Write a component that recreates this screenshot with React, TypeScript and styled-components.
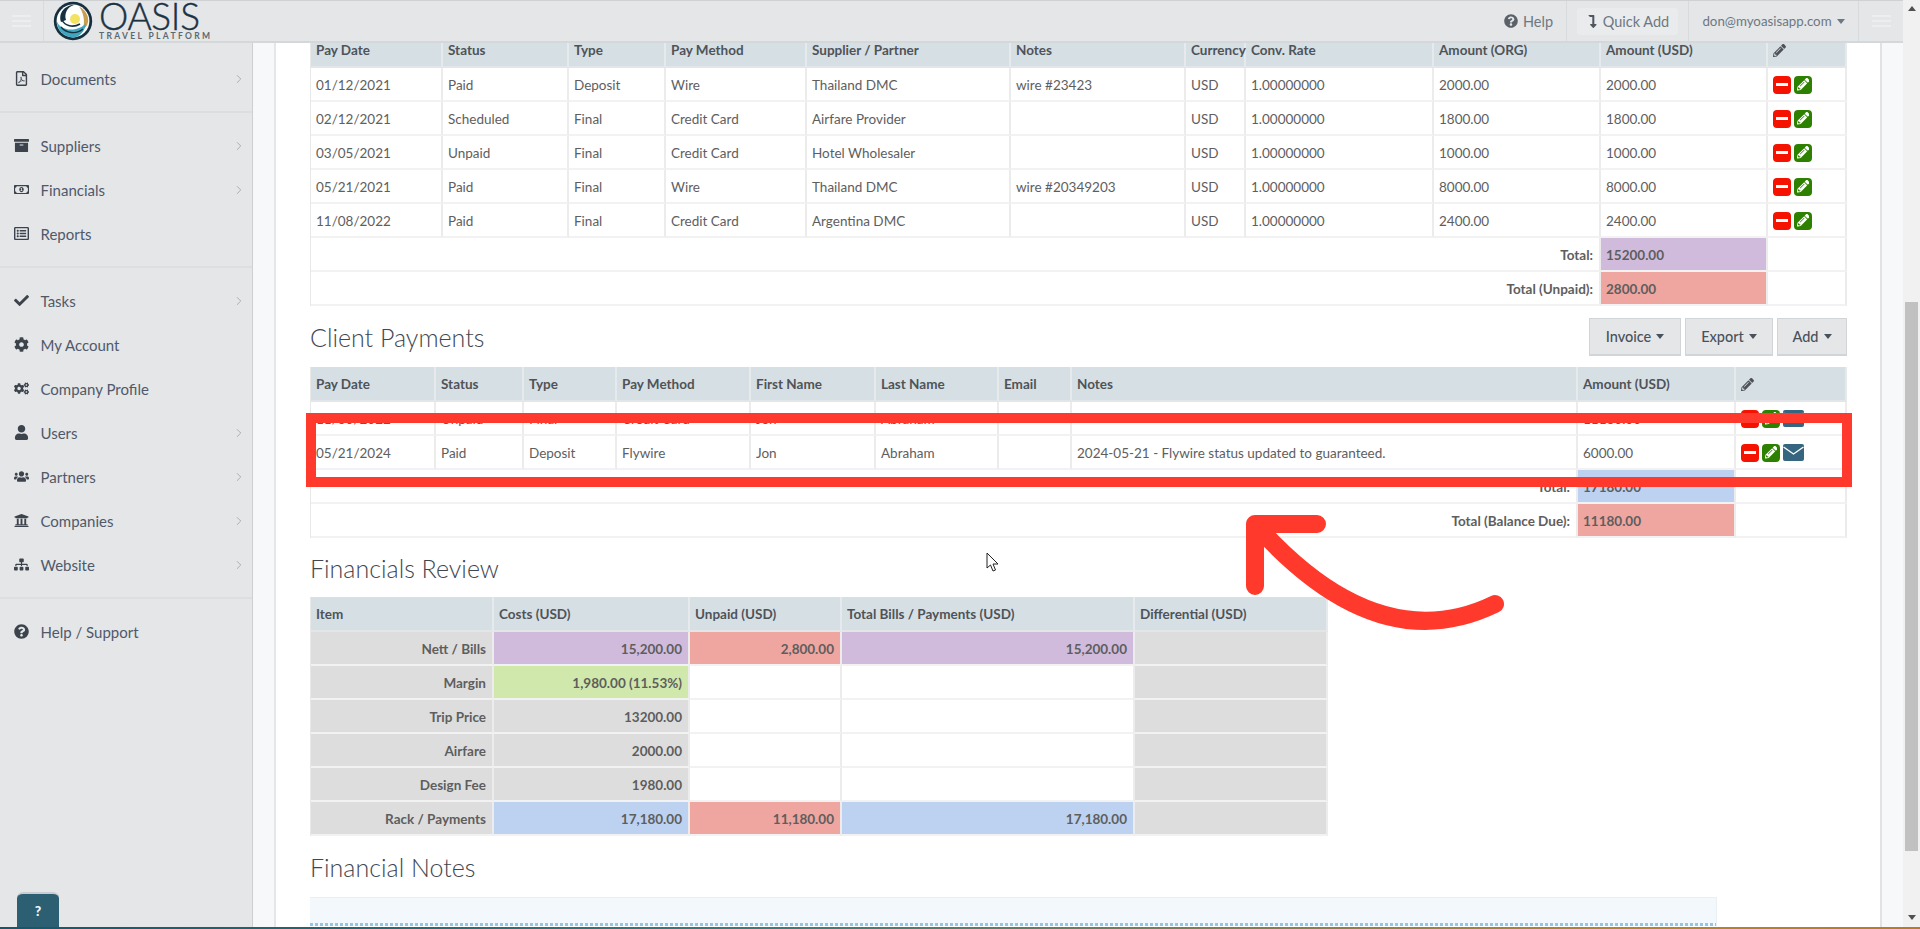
import styled, { createGlobalStyle } from "styled-components";
import { ChevronRight } from "lucide-react";
import {
  FaRegFilePdf,
  FaArchive,
  FaRegMoneyBillAlt,
  FaRegListAlt,
  FaCheck,
  FaCog,
  FaCogs,
  FaUser,
  FaUsers,
  FaUniversity,
  FaSitemap,
  FaQuestionCircle,
  FaPencilAlt,
  FaLevelDownAlt,
} from "react-icons/fa";

const GlobalStyle = createGlobalStyle`
  html, body { margin: 0; padding: 0; height: 100%; overflow: hidden; }
  body { font-family: "Lato", "Noto Sans", sans-serif; font-size: 14px; color: #5c5c5c; }
  * { box-sizing: border-box; }
`;

const Shell = styled.div`
  position: relative;
  height: 929px;
  display: flex;
  flex-direction: column;
  overflow: hidden;
  background: #fff;
`;
const Frame = styled.div`
  flex: 1;
  min-height: 0;
  display: flex;
`;
const PageColumn = styled.div`
  flex: 1;
  min-width: 0;
  display: flex;
  flex-direction: column;
`;

/* top bar */
const TopBar = styled.header`
  height: 43px;
  flex: none;
  display: flex;
  align-items: stretch;
  background: #e4e6e8;
  border-top: 1px solid #cfd2d5;
  border-bottom: 2px solid #d5d8db;
  color: #6d7882;
  font-size: 14.5px;
  position: relative;
  z-index: 2;
`;
const BurgerCell = styled.div<{ $w: number; $left?: boolean }>`
  width: ${(p) => p.$w}px;
  flex: none;
  display: flex;
  align-items: center;
  justify-content: center;
  ${(p) => (p.$left ? "border-right: 1px solid #d8dbde;" : "")}
`;
const Burger = styled.span`
  width: 19px;
  height: 12px;
  border-top: 2px solid #eceeef;
  border-bottom: 2px solid #eceeef;
  position: relative;
  &::after {
    content: "";
    position: absolute;
    left: 0;
    right: 0;
    top: 3px;
    height: 2px;
    background: #eceeef;
  }
`;
const LogoWrap = styled.div`
  display: flex;
  align-items: flex-start;
  margin-left: 9px;
  gap: 6px;
`;
const LogoText = styled.div`
  display: flex;
  flex-direction: column;
  width: 100px;
`;
const LogoName = styled.span`
  font-weight: 300;
  font-size: 37px;
  line-height: 30px;
  color: #1c3243;
  letter-spacing: -0.3px;
  -webkit-text-stroke: 0.4px #1c3243;
`;
const LogoSub = styled.span`
  font-size: 8.5px;
  line-height: 9px;
  margin-top: 1px;
  font-weight: 700;
  letter-spacing: 2.35px;
  color: #5c6972;
  white-space: nowrap;
`;
const TopSpacer = styled.div`
  flex: 1;
`;
const NavCell = styled.div<{ $w: number }>`
  width: ${(p) => p.$w}px;
  flex: none;
  display: flex;
  align-items: center;
  justify-content: center;
  gap: 5px;
  border-right: 1px solid #d8dbde;
  white-space: nowrap;
`;
const Email = styled.span`
  font-size: 13.3px;
`;
const QuickAdd = styled.span`
  display: flex;
  align-items: center;
  gap: 4px;
  height: 27px;
  padding: 0 9px;
  background: #e9ebec;
  border-radius: 3px;
  svg { color: #4e565e; font-size: 13px; }
`;
const HelpGlyph = styled(FaQuestionCircle)`
  color: #5a6169;
  font-size: 14px;
`;
const Caret = styled.span`
  display: inline-block;
  border-top: 5px solid currentColor;
  border-left: 4.5px solid transparent;
  border-right: 4.5px solid transparent;
`;

/* sidebar */
const Body = styled.div`
  flex: 1;
  min-height: 0;
  display: flex;
`;
const Sidebar = styled.nav`
  width: 253px;
  flex: none;
  background: #e4e6e8;
  border-right: 1px solid #cdd0d3;
  padding-top: 3px;
  color: #50596a;
  font-size: 15px;
`;
const NavGroup = styled.div`
  padding: 10.5px 0;
  border-bottom: 2px solid #dcdee1;
  &:last-child { border-bottom: 0; }
`;
const NavItem = styled.div`
  height: 44px;
  display: flex;
  align-items: center;
  padding: 0 6px 0 11px;
  gap: 9.5px;
`;
const NavIcon = styled.span`
  width: 20px;
  display: flex;
  justify-content: center;
  font-size: 15px;
  color: #3c434c;
`;
const NavLabel = styled.span`
  flex: 1;
`;
const Chevron = styled(ChevronRight)`
  color: #a2a8ae;
  width: 14px;
  height: 14px;
  stroke-width: 1.5;
`;

/* main area */
const Gutter = styled.div`
  width: 23px;
  flex: none;
  background: #f6f8fa;
  border-right: 2px solid #e4e6e8;
`;
const GutterRight = styled(Gutter)`
  border-right: 0;
  border-left: 2px solid #e0e2e5;
`;
const Content = styled.main`
  flex: 1;
  min-width: 0;
  overflow: hidden;
  padding: 0 33px 0 34px;
`;
const Scrolled = styled.div`
  margin-top: -10px;
`;
const Table = styled.table<{ $w: number }>`
  width: ${(p) => p.$w}px;
  table-layout: fixed;
  border-collapse: separate;
  border-spacing: 0;
  border-left: 1px solid #e8e8e8;
`;
const Col = styled.col<{ $w: number }>`
  width: ${(p) => p.$w}px;
`;
const Th = styled.th`
  height: 35px;
  padding: 1px 6px 0 5px;
  text-align: left;
  font-weight: 700;
  font-size: 13.5px;
  color: #4f5358;
  background: #d6dfe4;
  border-right: 2px solid #e6eaec;
  border-bottom: 2px solid #e3e6e8;
  white-space: nowrap;
  svg { color: #4f5358; font-size: 13px; display: block; }
`;
const Td = styled.td<{ $bg?: string; $right?: boolean; $bold?: boolean }>`
  height: 34px;
  padding: 1px 6px 0 5px;
  font-size: 13.5px;
  color: #5e5e5e;
  background: ${(p) => p.$bg ?? "#fff"};
  text-align: ${(p) => (p.$right ? "right" : "left")};
  font-weight: ${(p) => (p.$bold ? 700 : 400)};
  border-right: 2px solid #ececec;
  border-bottom: 2px solid #f2f2f2;
  white-space: nowrap;
`;
const SectionHead = styled.div<{ $h: number }>`
  height: ${(p) => p.$h}px;
  display: flex;
  align-items: center;
  justify-content: space-between;
  width: 1537px;
`;
const SectionTitle = styled.h3`
  margin: 0;
  font-weight: 300;
  font-size: 25px;
  color: #3f4750;
`;
const Buttons = styled.div`
  display: flex;
  gap: 4px;
`;
const DropButton = styled.button<{ $w: number }>`
  width: ${(p) => p.$w}px;
  height: 38px;
  display: flex;
  align-items: center;
  justify-content: center;
  gap: 5px;
  background: #e4e6e8;
  border: 1px solid #d2d5d8;
  border-bottom-width: 2px;
  font-family: inherit;
  font-size: 14.5px;
  font-weight: 500;
  color: #49525c;
`;
const Actions = styled.div`
  display: flex;
  align-items: center;
  gap: 3px;
`;
const Square = styled.span<{ $c: string }>`
  width: 18px;
  height: 18px;
  border-radius: 4px;
  background: ${(p) => p.$c};
  display: flex;
  align-items: center;
  justify-content: center;
  color: #fff;
  svg { font-size: 12.5px; }
`;
const MinusBar = styled.span`
  width: 12px;
  height: 3px;
  background: #fff;
`;
const NotesBox = styled.div`
  width: 1407px;
  height: 29px;
  background: repeating-linear-gradient(90deg, #92c5e8 0 3px, transparent 3px 5px) bottom / 100% 3px no-repeat, #f3f8fc;
  border-top: 1px solid #e8f0f6;
  border-right: 1px solid #e8f0f6;
`;

/* scrollbar */
const ScrollBar = styled.div`
  width: 17px;
  flex: none;
  background: #f1f1f1;
  display: flex;
  flex-direction: column;
  align-items: center;
  padding: 6px 0 6px;
`;
const ArrowUp = styled.span`
  border-bottom: 5px solid #505050;
  border-left: 4px solid transparent;
  border-right: 4px solid transparent;
`;
const ArrowDown = styled.span`
  border-top: 5px solid #505050;
  border-left: 4px solid transparent;
  border-right: 4px solid transparent;
  margin-top: auto;
  margin-bottom: 1px;
`;
const Thumb = styled.div`
  width: 13px;
  height: 549px;
  margin-top: 291px;
  background: #c1c1c1;
`;
const BottomLine = styled.div`
  height: 2px;
  flex: none;
  background: linear-gradient(90deg, #17566a 0%, #3d7a78 40%, #b5842f 85%, #b87a2a 100%);
`;

/* things lying over the page */
const HelpTab = styled.button`
  position: absolute;
  left: 17px;
  bottom: 2px;
  width: 42px;
  height: 35px;
  border: 0;
  border-top: 2px solid #c9ccd0;
  border-radius: 6px 6px 0 0;
  background: #2d5f73;
  color: #f2f5f6;
  font-family: inherit;
  font-weight: 900;
  font-size: 14px;
  z-index: 3;
`;
const RedFrame = styled.div`
  position: absolute;
  left: 306px;
  top: 413px;
  width: 1546px;
  height: 74px;
  border: 10px solid #ff392c;
  z-index: 4;
`;
const Overlay = styled.svg`
  position: absolute;
  left: 0;
  top: 0;
  z-index: 4;
  pointer-events: none;
`;

const Minus = () => (
  <Square $c="#f51300">
    <MinusBar />
  </Square>
);
const Edit = () => (
  <Square $c="#2e8000">
    <FaPencilAlt />
  </Square>
);
const Mail = () => (
  <svg width="21" height="17" viewBox="0 0 21 17">
    <rect width="21" height="17" rx="2" fill="#36657f" />
    <path d="M0.5 3 L10.5 10 L20.5 3" fill="none" stroke="#fff" strokeWidth="1.4" />
  </svg>
);

const Logo = () => (
  <svg width="40" height="40" viewBox="0 0 40 40">
    <circle cx="20" cy="20" r="19.2" fill="#17303f" />
    <circle cx="20" cy="20" r="16.4" fill="#fff" />
    <path d="M26 5.5 C33 9 36 16 35 21 C34.4 25 32 27 30 28 C32 21 31 12 26 5.5 Z" fill="#c9a04e" />
    <path d="M3.8 20 C6 27 15 30 23 28 C27 27 31 25 33 22 C32 31 26 36.4 20 36.4 C11 36.4 4 29 3.8 20 Z" fill="#3fa6bf" />
    <path d="M9 19 C12 25 20 27 27 23" fill="none" stroke="#17303f" strokeWidth="1.6" />
    <path d="M8 26 C13 32 23 34 30 28" fill="none" stroke="#17303f" strokeWidth="1.3" />
    <path d="M8 21 C5 12 12 4 21 4 C14 6 11 13 13 19 Z" fill="#17303f" />
    <circle cx="22" cy="18" r="5" fill="#f2e462" />
  </svg>
);

type Bill = [string, string, string, string, string, string, string];
const bills: Bill[] = [
  ["01/12/2021", "Paid", "Deposit", "Wire", "Thailand DMC", "wire #23423", "2000.00"],
  ["02/12/2021", "Scheduled", "Final", "Credit Card", "Airfare Provider", "", "1800.00"],
  ["03/05/2021", "Unpaid", "Final", "Credit Card", "Hotel Wholesaler", "", "1000.00"],
  ["05/21/2021", "Paid", "Final", "Wire", "Thailand DMC", "wire #20349203", "8000.00"],
  ["11/08/2022", "Paid", "Final", "Credit Card", "Argentina DMC", "", "2400.00"],
];
const billCols = [132, 126, 97, 141, 204, 175, 60, 188, 167, 167, 79];
const billHead = ["Pay Date", "Status", "Type", "Pay Method", "Supplier / Partner", "Notes", "Currency", "Conv. Rate", "Amount (ORG)", "Amount (USD)"];

const payCols = [125, 88, 93, 134, 125, 123, 73, 506, 158, 111];
const payHead = ["Pay Date", "Status", "Type", "Pay Method", "First Name", "Last Name", "Email", "Notes", "Amount (USD)"];
const payments = [
  ["11/30/2022", "Unpaid", "Final", "Credit Card", "Jon", "Abraham", "", "", "11180.00"],
  ["05/21/2024", "Paid", "Deposit", "Flywire", "Jon", "Abraham", "", "2024-05-21 - Flywire status updated to guaranteed.", "6000.00"],
];

const PURPLE = "#d0bbdd";
const RED = "#efa5a0";
const BLUE = "#bcd2f0";
const GREEN = "#d0e8ab";
const GREY = "#dddddd";

const reviewCols = [183, 196, 152, 293, 193];
const review: { item: string; cost: string; costBg: string; unpaid?: string; unpaidBg?: string; bills?: string; billsBg?: string }[] = [
  { item: "Nett / Bills", cost: "15,200.00", costBg: PURPLE, unpaid: "2,800.00", unpaidBg: RED, bills: "15,200.00", billsBg: PURPLE },
  { item: "Margin", cost: "1,980.00 (11.53%)", costBg: GREEN },
  { item: "Trip Price", cost: "13200.00", costBg: GREY },
  { item: "Airfare", cost: "2000.00", costBg: GREY },
  { item: "Design Fee", cost: "1980.00", costBg: GREY },
  { item: "Rack / Payments", cost: "17,180.00", costBg: BLUE, unpaid: "11,180.00", unpaidBg: RED, bills: "17,180.00", billsBg: BLUE },
];

const navGroups = [
  [{ icon: <FaRegFilePdf />, label: "Documents", more: true }],
  [
    { icon: <FaArchive />, label: "Suppliers", more: true },
    { icon: <FaRegMoneyBillAlt />, label: "Financials", more: true },
    { icon: <FaRegListAlt />, label: "Reports", more: false },
  ],
  [
    { icon: <FaCheck />, label: "Tasks", more: true },
    { icon: <FaCog />, label: "My Account", more: false },
    { icon: <FaCogs />, label: "Company Profile", more: false },
    { icon: <FaUser />, label: "Users", more: true },
    { icon: <FaUsers />, label: "Partners", more: true },
    { icon: <FaUniversity />, label: "Companies", more: true },
    { icon: <FaSitemap />, label: "Website", more: true },
  ],
  [{ icon: <FaQuestionCircle />, label: "Help / Support", more: false }],
];

function App() {
  return (
    <Shell>
      <GlobalStyle />
      <Frame>
        <PageColumn>
          <TopBar>
            <BurgerCell $w={44} $left>
              <Burger />
            </BurgerCell>
            <LogoWrap>
              <Logo />
              <LogoText>
                <LogoName>OASIS</LogoName>
                <LogoSub>TRAVEL PLATFORM</LogoSub>
              </LogoText>
            </LogoWrap>
            <TopSpacer />
            <NavCell $w={76}>
              <HelpGlyph />
              Help
            </NavCell>
            <NavCell $w={122}>
              <QuickAdd>
                <FaLevelDownAlt />
                Quick Add
              </QuickAdd>
            </NavCell>
            <NavCell $w={170}>
              <Email>don@myoasisapp.com</Email>
              <Caret />
            </NavCell>
            <BurgerCell $w={44}>
              <Burger />
            </BurgerCell>
          </TopBar>
          <Body>
            <Sidebar>
              {navGroups.map((group) => (
                <NavGroup key={group[0].label}>
                  {group.map((item) => (
                    <NavItem key={item.label}>
                      <NavIcon>{item.icon}</NavIcon>
                      <NavLabel>{item.label}</NavLabel>
                      {item.more && <Chevron />}
                    </NavItem>
                  ))}
                </NavGroup>
              ))}
            </Sidebar>
            <Gutter />
            <Content>
              <Scrolled>
                <Table $w={1537}>
                  <colgroup>
                    {billCols.map((w, i) => (
                      <Col key={i} $w={w} />
                    ))}
                  </colgroup>
                  <thead>
                    <tr>
                      {billHead.map((h) => (
                        <Th key={h}>{h}</Th>
                      ))}
                      <Th>
                        <FaPencilAlt />
                      </Th>
                    </tr>
                  </thead>
                  <tbody>
                    {bills.map((b) => (
                      <tr key={b[0]}>
                        <Td>{b[0]}</Td>
                        <Td>{b[1]}</Td>
                        <Td>{b[2]}</Td>
                        <Td>{b[3]}</Td>
                        <Td>{b[4]}</Td>
                        <Td>{b[5]}</Td>
                        <Td>USD</Td>
                        <Td>1.00000000</Td>
                        <Td>{b[6]}</Td>
                        <Td>{b[6]}</Td>
                        <Td>
                          <Actions>
                            <Minus />
                            <Edit />
                          </Actions>
                        </Td>
                      </tr>
                    ))}
                    <tr>
                      <Td colSpan={9} $right $bold>
                        Total:
                      </Td>
                      <Td $bg={PURPLE} $bold>
                        15200.00
                      </Td>
                      <Td />
                    </tr>
                    <tr>
                      <Td colSpan={9} $right $bold>
                        Total (Unpaid):
                      </Td>
                      <Td $bg={RED} $bold>
                        2800.00
                      </Td>
                      <Td />
                    </tr>
                  </tbody>
                </Table>

                <SectionHead $h={61}>
                  <SectionTitle>Client Payments</SectionTitle>
                  <Buttons>
                    <DropButton $w={92}>
                      Invoice <Caret />
                    </DropButton>
                    <DropButton $w={88}>
                      Export <Caret />
                    </DropButton>
                    <DropButton $w={70}>
                      Add <Caret />
                    </DropButton>
                  </Buttons>
                </SectionHead>
                <Table $w={1537}>
                  <colgroup>
                    {payCols.map((w, i) => (
                      <Col key={i} $w={w} />
                    ))}
                  </colgroup>
                  <thead>
                    <tr>
                      {payHead.map((h) => (
                        <Th key={h}>{h}</Th>
                      ))}
                      <Th>
                        <FaPencilAlt />
                      </Th>
                    </tr>
                  </thead>
                  <tbody>
                    {payments.map((p) => (
                      <tr key={p[0]}>
                        {p.map((cell, i) => (
                          <Td key={i}>{cell}</Td>
                        ))}
                        <Td>
                          <Actions>
                            <Minus />
                            <Edit />
                            <Mail />
                          </Actions>
                        </Td>
                      </tr>
                    ))}
                    <tr>
                      <Td colSpan={8} $right $bold>
                        Total:
                      </Td>
                      <Td $bg={BLUE} $bold>
                        17180.00
                      </Td>
                      <Td />
                    </tr>
                    <tr>
                      <Td colSpan={8} $right $bold>
                        Total (Balance Due):
                      </Td>
                      <Td $bg={RED} $bold>
                        11180.00
                      </Td>
                      <Td />
                    </tr>
                  </tbody>
                </Table>

                <SectionHead $h={59}>
                  <SectionTitle>Financials Review</SectionTitle>
                </SectionHead>
                <Table $w={1018}>
                  <colgroup>
                    {reviewCols.map((w, i) => (
                      <Col key={i} $w={w} />
                    ))}
                  </colgroup>
                  <thead>
                    <tr>
                      <Th>Item</Th>
                      <Th>Costs (USD)</Th>
                      <Th>Unpaid (USD)</Th>
                      <Th>Total Bills / Payments (USD)</Th>
                      <Th>Differential (USD)</Th>
                    </tr>
                  </thead>
                  <tbody>
                    {review.map((r) => (
                      <tr key={r.item}>
                        <Td $bg={GREY} $right $bold>
                          {r.item}
                        </Td>
                        <Td $bg={r.costBg} $right $bold>
                          {r.cost}
                        </Td>
                        <Td $bg={r.unpaidBg} $right $bold>
                          {r.unpaid}
                        </Td>
                        <Td $bg={r.billsBg} $right $bold>
                          {r.bills}
                        </Td>
                        <Td $bg={GREY} />
                      </tr>
                    ))}
                  </tbody>
                </Table>

                <SectionHead $h={61}>
                  <SectionTitle>Financial Notes</SectionTitle>
                </SectionHead>
                <NotesBox />
              </Scrolled>
            </Content>
            <GutterRight />
          </Body>
        </PageColumn>
        <ScrollBar>
          <ArrowUp />
          <Thumb />
          <ArrowDown />
        </ScrollBar>
      </Frame>
      <BottomLine />

      <HelpTab>?</HelpTab>
      <RedFrame />
      <Overlay width="1920" height="929" viewBox="0 0 1920 929">
        <path
          d="M1495 604 C1425 638 1345 625 1255 524 M1317 524 H1255 V586"
          fill="none"
          stroke="#ff392c"
          strokeWidth="18"
          strokeLinecap="round"
          strokeLinejoin="round"
        />
        <path
          d="M987 553 V568 L990.5 565 L993 571 L995.5 570 L993 564 L998 564 Z"
          fill="#fff"
          stroke="#222"
          strokeWidth="1"
        />
      </Overlay>
    </Shell>
  );
}

export default App;
